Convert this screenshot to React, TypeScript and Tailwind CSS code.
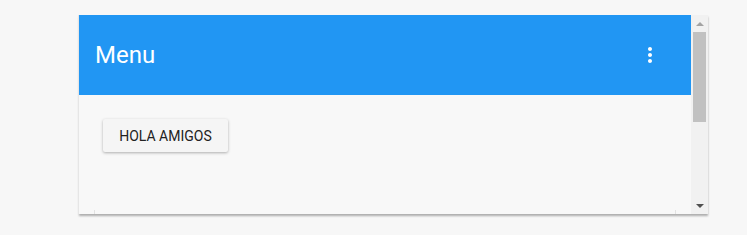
import { MdMoreVert } from 'react-icons/md';

function Scrollbar() {
  return (
    <div className="flex w-[17px] shrink-0 flex-col bg-[#f1f1f1]">
      <div className="flex h-[17px] items-center justify-center">
        <div className="h-0 w-0 border-x-[4px] border-b-[4px] border-x-transparent border-b-[#a3a3a3]" />
      </div>
      <div className="mx-[2px] h-[90px] bg-[#c1c1c1]" />
      <div className="flex-1" />
      <div className="flex h-[17px] items-center justify-center">
        <div className="h-0 w-0 border-x-[4px] border-t-[4px] border-x-transparent border-t-[#505050]" />
      </div>
    </div>
  );
}

export default function App() {
  return (
    <div
      className="min-h-[235px] bg-[#f7f7f7] pl-[79px] pt-[15px]"
      style={{ fontFamily: 'Roboto, "Liberation Sans", sans-serif' }}
    >
      <div className="flex h-[199px] w-[629px] bg-[#f8f8f8] shadow-[-1px_0_0_#e6e6e6,0_2px_2px_rgba(0,0,0,0.3)]">
        <div className="flex min-w-0 flex-1 flex-col">
          {/* toolbar */}
          <header className="flex h-[80px] shrink-0 items-center justify-between bg-[#2196f3] pl-4 pr-[29px]">
            <h1 className="text-2xl font-normal leading-8 text-white">Menu</h1>
            <MdMoreVert size={24} className="text-white" />
          </header>

          <main className="flex flex-1 flex-col px-6 pt-6">
            <button className="flex h-[33px] w-[125px] items-center justify-center rounded-[2px] bg-[#f5f5f5] text-sm text-[#222] shadow-[0_1px_3px_rgba(0,0,0,0.3)]">
              HOLA AMIGOS
            </button>
            <div className="flex-1" />
            <div className="-mx-[9px] h-[4px] border-x border-[#e2e2e2]" />
          </main>
        </div>
        <Scrollbar />
      </div>
    </div>
  );
}
